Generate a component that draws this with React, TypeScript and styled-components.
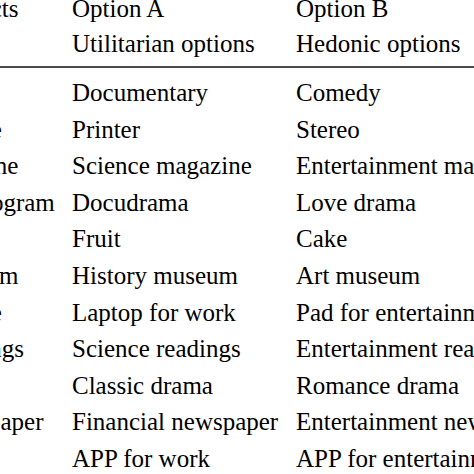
import React from 'react';
import styled, { createGlobalStyle } from 'styled-components';

const rows: [string, string, string][] = [
    ['Movie', 'Documentary', 'Comedy'],
    ['Device', 'Printer', 'Stereo'],
    ['Machine', 'Science magazine', 'Entertainment magazine'],
    ['TV program', 'Docudrama', 'Love drama'],
    ['Food', 'Fruit', 'Cake'],
    ['Museum', 'History museum', 'Art museum'],
    ['Device', 'Laptop for work', 'Pad for entertainment'],
    ['Readings', 'Science readings', 'Entertainment readings'],
    ['Drama', 'Classic drama', 'Romance drama'],
    ['Newspaper', 'Financial newspaper', 'Entertainment newspaper'],
    ['APP', 'APP for work', 'APP for entertainment'],
];

const GlobalStyle = createGlobalStyle`
    html, body {
        margin: 0;
        padding: 0;
        background: #ffffff;
        overflow: hidden;
    }
    body {
        width: 474px;
        height: 474px;
    }
`;

const Table = styled.div`
    display: grid;
    grid-template-columns: 141px 224px max-content;
    margin-left: -69px;
    margin-top: -9px;
    font-family: "Liberation Serif", "Times New Roman", serif;
    font-size: 25px;
    color: #000000;
    white-space: nowrap;
`;

const HeadCell = styled.div`
    line-height: 35px;
`;

const Rule = styled.div`
    grid-column: 1 / -1;
    height: 2px;
    margin: 5px 0 7px;
    background: #4a4a4a;
`;

const Cell = styled.div`
    line-height: 36.6px;
`;

export default function App() {
    return (
        <>
            <GlobalStyle />
            <Table>
                <HeadCell>Products</HeadCell>
                <HeadCell>Option A</HeadCell>
                <HeadCell>Option B</HeadCell>
                <HeadCell />
                <HeadCell>Utilitarian options</HeadCell>
                <HeadCell>Hedonic options</HeadCell>
                <Rule />
                {rows.map(([ctx, a, b], i) => (
                    <React.Fragment key={i}>
                        <Cell>{ctx}</Cell>
                        <Cell>{a}</Cell>
                        <Cell>{b}</Cell>
                    </React.Fragment>
                ))}
            </Table>
        </>
    );
}
